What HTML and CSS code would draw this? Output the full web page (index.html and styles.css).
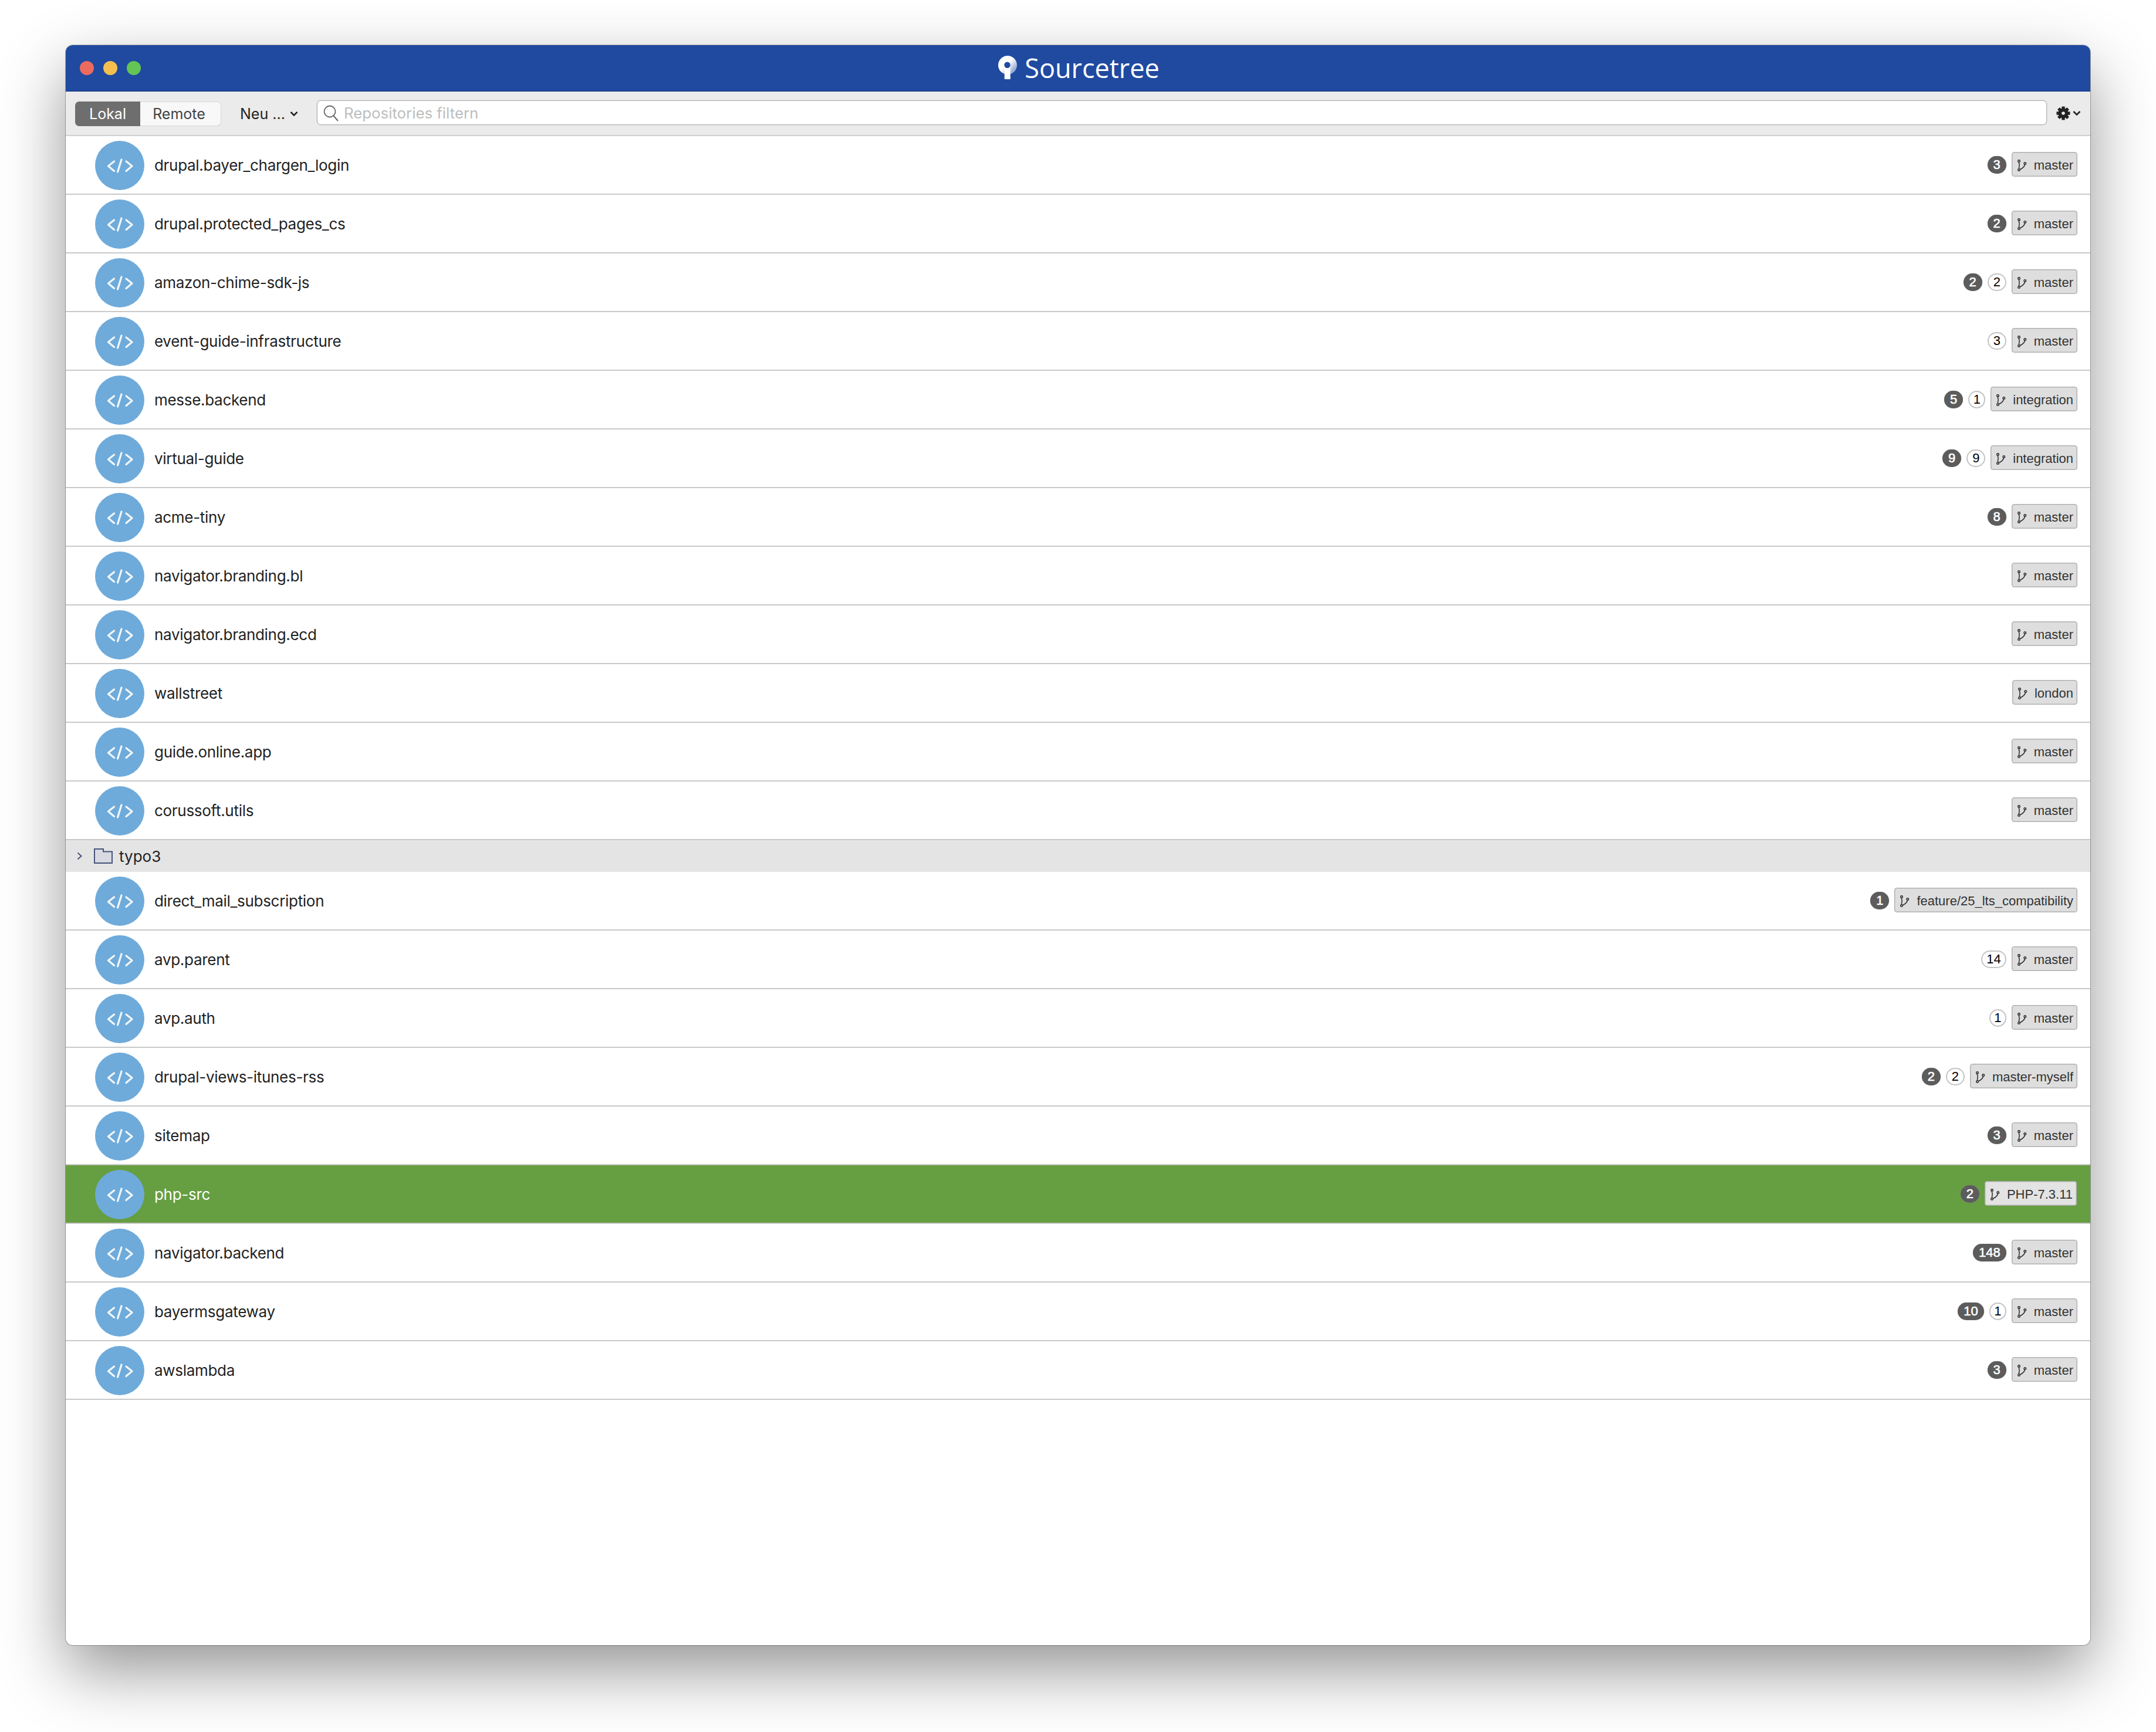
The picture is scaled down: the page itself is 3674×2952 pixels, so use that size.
FILE: index.html
```html
<!DOCTYPE html>
<html lang="de">
<head>
<meta charset="utf-8">
<title>Sourcetree</title>
<link rel="stylesheet" href="styles.css">
</head>
<body>
<svg class="defs" width="0" height="0" aria-hidden="true">
  <symbol id="code" viewBox="0 0 84 84">
    <path d="M32.500 35 22.500 43l10 8.500M53 35l10 8-10 8.500M45 32l-6.500 21" fill="none" stroke="#f2f7fb" stroke-width="3.200" stroke-linecap="round" stroke-linejoin="round"/>
  </symbol>
  <symbol id="branch" viewBox="0 0 16 20">
    <g fill="none" stroke="#333" stroke-width="1.600">
      <circle cx="2.500" cy="2.400" r="1.700"/>
      <circle cx="2.500" cy="17.500" r="1.700"/>
      <circle cx="12.800" cy="6.400" r="1.700"/>
      <path d="M2.500 4.100c-.4 2 .8 3.500.6 5.500-.2 2-.6 3.500-.6 6.200M12.500 8.100c-.3 3.500-3 6.300-8.200 8.600"/>
    </g>
  </symbol>
</svg>
<main class="window">
  <header class="titlebar">
    <div class="lights"><span class="light red"></span><span class="light yellow"></span><span class="light green"></span></div>
    <div class="brand">
      <svg class="logo" viewBox="0 0 32 40" aria-hidden="true">
        <defs><linearGradient id="lg" gradientUnits="userSpaceOnUse" x1="15" y1="14" x2="29" y2="28"><stop offset="0" stop-color="#fff"/><stop offset="1" stop-color="#8299cb"/></linearGradient></defs>
        <circle cx="16" cy="16" r="16" fill="url(#lg)"/>
        <rect x="10.700" y="14" width="10" height="26" fill="#fff"/>
        <circle cx="15.500" cy="15.700" r="5.200" fill="#1f4aa0"/>
      </svg>
      <span class="brand-name">Sourcetree</span>
    </div>
  </header>
  <div class="toolbar">
    <div class="segments"><span class="segment active">Lokal</span><span class="segment">Remote</span></div>
    <div class="new-menu"><span>Neu ...</span>
      <svg class="chev" viewBox="0 0 14 10" aria-hidden="true"><path d="M1.500 2 7 7.500 12.500 2" fill="none" stroke="#222" stroke-width="2.600"/></svg>
    </div>
    <label class="search">
      <svg class="search-icon" viewBox="0 0 26 28" aria-hidden="true"><circle cx="11" cy="11" r="9.500" fill="none" stroke="#666" stroke-width="1.800"/><path d="m17 18 8 9" stroke="#666" stroke-width="2" fill="none"/></svg>
      <span class="placeholder">Repositories filtern</span>
    </label>
    <div class="gear-menu">
      <svg class="gear" viewBox="0 0 24 24" aria-hidden="true">
        <path d="M12 .5v23M.5 12h23M3.900 3.900l16.200 16.200M20.100 3.900 3.900 20.100" stroke="#222" stroke-width="5.400" fill="none"/>
        <circle cx="12" cy="12" r="8.500" fill="#222"/><circle cx="12" cy="12" r="2.800" fill="#ebebeb"/>
      </svg>
      <svg class="chev" viewBox="0 0 14 10" aria-hidden="true"><path d="M1.500 2 7 7.500 12.500 2" fill="none" stroke="#222" stroke-width="2.600"/></svg>
    </div>
  </div>
  <section class="list">
    <div class="row"><svg class="avatar"><use href="#code"/></svg><span class="name">drupal.bayer_chargen_login</span><span class="count dark">3</span><span class="branch"><svg class="b-icon"><use href="#branch"/></svg>master</span></div>
    <div class="row"><svg class="avatar"><use href="#code"/></svg><span class="name">drupal.protected_pages_cs</span><span class="count dark">2</span><span class="branch"><svg class="b-icon"><use href="#branch"/></svg>master</span></div>
    <div class="row"><svg class="avatar"><use href="#code"/></svg><span class="name">amazon-chime-sdk-js</span><span class="count dark">2</span><span class="count">2</span><span class="branch"><svg class="b-icon"><use href="#branch"/></svg>master</span></div>
    <div class="row"><svg class="avatar"><use href="#code"/></svg><span class="name">event-guide-infrastructure</span><span class="count">3</span><span class="branch"><svg class="b-icon"><use href="#branch"/></svg>master</span></div>
    <div class="row"><svg class="avatar"><use href="#code"/></svg><span class="name">messe.backend</span><span class="count dark">5</span><span class="count one">1</span><span class="branch"><svg class="b-icon"><use href="#branch"/></svg>integration</span></div>
    <div class="row"><svg class="avatar"><use href="#code"/></svg><span class="name">virtual-guide</span><span class="count dark">9</span><span class="count">9</span><span class="branch"><svg class="b-icon"><use href="#branch"/></svg>integration</span></div>
    <div class="row"><svg class="avatar"><use href="#code"/></svg><span class="name">acme-tiny</span><span class="count dark">8</span><span class="branch"><svg class="b-icon"><use href="#branch"/></svg>master</span></div>
    <div class="row"><svg class="avatar"><use href="#code"/></svg><span class="name">navigator.branding.bl</span><span class="branch"><svg class="b-icon"><use href="#branch"/></svg>master</span></div>
    <div class="row"><svg class="avatar"><use href="#code"/></svg><span class="name">navigator.branding.ecd</span><span class="branch"><svg class="b-icon"><use href="#branch"/></svg>master</span></div>
    <div class="row"><svg class="avatar"><use href="#code"/></svg><span class="name">wallstreet</span><span class="branch"><svg class="b-icon"><use href="#branch"/></svg>london</span></div>
    <div class="row"><svg class="avatar"><use href="#code"/></svg><span class="name">guide.online.app</span><span class="branch"><svg class="b-icon"><use href="#branch"/></svg>master</span></div>
    <div class="row"><svg class="avatar"><use href="#code"/></svg><span class="name">corussoft.utils</span><span class="branch"><svg class="b-icon"><use href="#branch"/></svg>master</span></div>
    <div class="group">
      <svg class="disclosure" viewBox="0 0 10 14" aria-hidden="true"><path d="m1.500 1.500 6 5.500-6 5.500" fill="none" stroke="#4a5678" stroke-width="2"/></svg>
      <svg class="folder" viewBox="0 0 32 26" aria-hidden="true"><path d="M1 25V1h15v4.500h15V25Z" fill="#d8dae2" stroke="#45547a" stroke-width="2"/></svg>
      <span class="group-name">typo3</span>
    </div>
    <div class="row"><svg class="avatar"><use href="#code"/></svg><span class="name">direct_mail_subscription</span><span class="count dark">1</span><span class="branch"><svg class="b-icon"><use href="#branch"/></svg>feature/25_lts_compatibility</span></div>
    <div class="row"><svg class="avatar"><use href="#code"/></svg><span class="name">avp.parent</span><span class="count">14</span><span class="branch"><svg class="b-icon"><use href="#branch"/></svg>master</span></div>
    <div class="row"><svg class="avatar"><use href="#code"/></svg><span class="name">avp.auth</span><span class="count one">1</span><span class="branch"><svg class="b-icon"><use href="#branch"/></svg>master</span></div>
    <div class="row"><svg class="avatar"><use href="#code"/></svg><span class="name">drupal-views-itunes-rss</span><span class="count dark">2</span><span class="count">2</span><span class="branch"><svg class="b-icon"><use href="#branch"/></svg>master-myself</span></div>
    <div class="row"><svg class="avatar"><use href="#code"/></svg><span class="name">sitemap</span><span class="count dark">3</span><span class="branch"><svg class="b-icon"><use href="#branch"/></svg>master</span></div>
    <div class="row selected"><svg class="avatar"><use href="#code"/></svg><span class="name">php-src</span><span class="count dark">2</span><span class="branch"><svg class="b-icon"><use href="#branch"/></svg>PHP-7.3.11</span></div>
    <div class="row"><svg class="avatar"><use href="#code"/></svg><span class="name">navigator.backend</span><span class="count dark">148</span><span class="branch"><svg class="b-icon"><use href="#branch"/></svg>master</span></div>
    <div class="row"><svg class="avatar"><use href="#code"/></svg><span class="name">bayermsgateway</span><span class="count dark">10</span><span class="count one">1</span><span class="branch"><svg class="b-icon"><use href="#branch"/></svg>master</span></div>
    <div class="row"><svg class="avatar"><use href="#code"/></svg><span class="name">awslambda</span><span class="count dark">3</span><span class="branch"><svg class="b-icon"><use href="#branch"/></svg>master</span></div>
  </section>
</main>
</body>
</html>
```

FILE: styles.css
```css
* { box-sizing: border-box; }
html, body { margin: 0; background: #fff; }
body { width: 3674px; height: 2952px; padding: 77px 112px 0; overflow: hidden; }
.defs { position: absolute; }

.window {
  width: 3450px;
  height: 2727px;
  display: flex;
  flex-direction: column;
  background: #fff;
  border-radius: 12px;
  overflow: hidden;
  box-shadow: 0 0 0 1px rgba(0,0,0,.28), 0 44px 110px rgba(0,0,0,.42);
}

.titlebar {
  height: 79px;
  flex: none;
  display: flex;
  align-items: center;
  justify-content: center;
  position: relative;
  background: #1f4aa0;
  border-bottom: 1px solid #0c2c7a;
}
.lights { position: absolute; left: 24px; top: 27px; display: flex; gap: 16px; }
.light { width: 24px; height: 24px; border-radius: 50%; }
.red { background: #ed6a5e; }
.yellow { background: #f5bf4f; }
.green { background: #62c554; }
.brand { display: flex; align-items: center; gap: 13px; margin: -2px 0 0 3px; }
.logo { width: 32px; height: 40px; }
.brand-name { color: #fff; font: 45px/1 "Open Sans", sans-serif; }

.toolbar {
  height: 76px;
  flex: none;
  display: flex;
  align-items: center;
  padding: 0 16px 0 16px;
  background: #ebebeb;
  border-bottom: 2px solid #d0d0d0;
  font-family: Inter, sans-serif;
  font-size: 25px;
  color: #222;
}
.segments {
  display: flex;
  width: 249px;
  height: 42px;
  margin-top: 2px;
  border-radius: 7px;
  overflow: hidden;
  background: #f8f8f8;
  box-shadow: inset 0 0 0 1px #d8d8d8, inset 0 -1px 0 #c4c4c4;
}
.segment { flex: 1 1 138px; display: flex; align-items: center; justify-content: center; padding-right: 6px; color: #444; }
.segment.active { flex: 0 0 111px; padding: 0; background: #6e6e6e; color: #fff; }
.new-menu { display: flex; align-items: center; gap: 8px; margin-left: 32px; margin-top: 2px; width: 131px; }
.chev { width: 14px; height: 10px; }
.search {
  flex: 1;
  height: 42px;
  display: flex;
  align-items: center;
  gap: 9px;
  padding-left: 10px;
  background: #fff;
  border: 1px solid #b0b0b0;
  border-radius: 7px;
  box-shadow: 0 0 0 1px rgba(190,190,190,.35);
  margin-top: -2px;
}
.search-icon { width: 26px; height: 28px; margin-top: 2px; }
.placeholder { color: #bdbdbd; font-size: 25.800px; }
.gear-menu { display: flex; align-items: center; gap: 4px; margin-left: 16px; width: 42px; flex: none; }
.gear { width: 24px; height: 24px; flex: none; }

.list { flex: 1; display: flex; flex-direction: column; font-family: Inter, sans-serif; }
.row {
  height: 100px;
  flex: none;
  display: flex;
  align-items: center;
  gap: 9px;
  padding: 2px 22px 0 50px;
  border-bottom: 2px solid #c9c9c9;
  color: #222;
  font-size: 26px;
  letter-spacing: -.3px;
}
.avatar { width: 84px; height: 84px; flex: none; border-radius: 50%; background: #6eabdb; margin-right: 8px; }
.name { flex: 1; margin-top: -2px; }
.selected { background: #669e42; color: #fff; }
.selected .branch { margin-right: 1px; background: #e3e3e3; }

.count {
  min-width: 32px;
  height: 30px;
  margin-top: -2px;
  padding: 0 7px;
  display: flex;
  align-items: center;
  justify-content: center;
  border-radius: 15px;
  border: 2px solid #c4c4c4;
  background: #fff;
  color: #000;
  letter-spacing: 0;
  font: 22px/1 "Liberation Sans", sans-serif;
}
.count.one { min-width: 29px; padding: 0 6px; }
.count.dark {
  padding: 0 8px;
  border-color: #5c5c5c;
  background: #5c5c5c;
  color: #fff;
  -webkit-text-stroke: .6px #fff;
  box-shadow: 0 0 1px #999;
}
.branch {
  height: 42px;
  display: flex;
  align-items: center;
  gap: 13px;
  padding: 3px 6px 0 9px;
  margin-top: -4px;
  border: 1px solid #aeaeae;
  border-radius: 4px;
  box-shadow: inset 0 0 0 1px #cacaca;
  background: #dedede;
  color: #333;
  letter-spacing: 0;
  font: 22px/1 "Liberation Sans", sans-serif;
}
.b-icon { width: 16px; height: 20px; flex: none; margin-right: -1px; }

.group {
  height: 54px;
  flex: none;
  display: flex;
  align-items: center;
  padding-left: 19px;
  background: #e4e4e4;
  color: #222;
  font-size: 26px;
}
.disclosure { width: 10px; height: 14px; }
.folder { width: 32px; height: 26px; margin: 0 11px 0 19px; }
```
